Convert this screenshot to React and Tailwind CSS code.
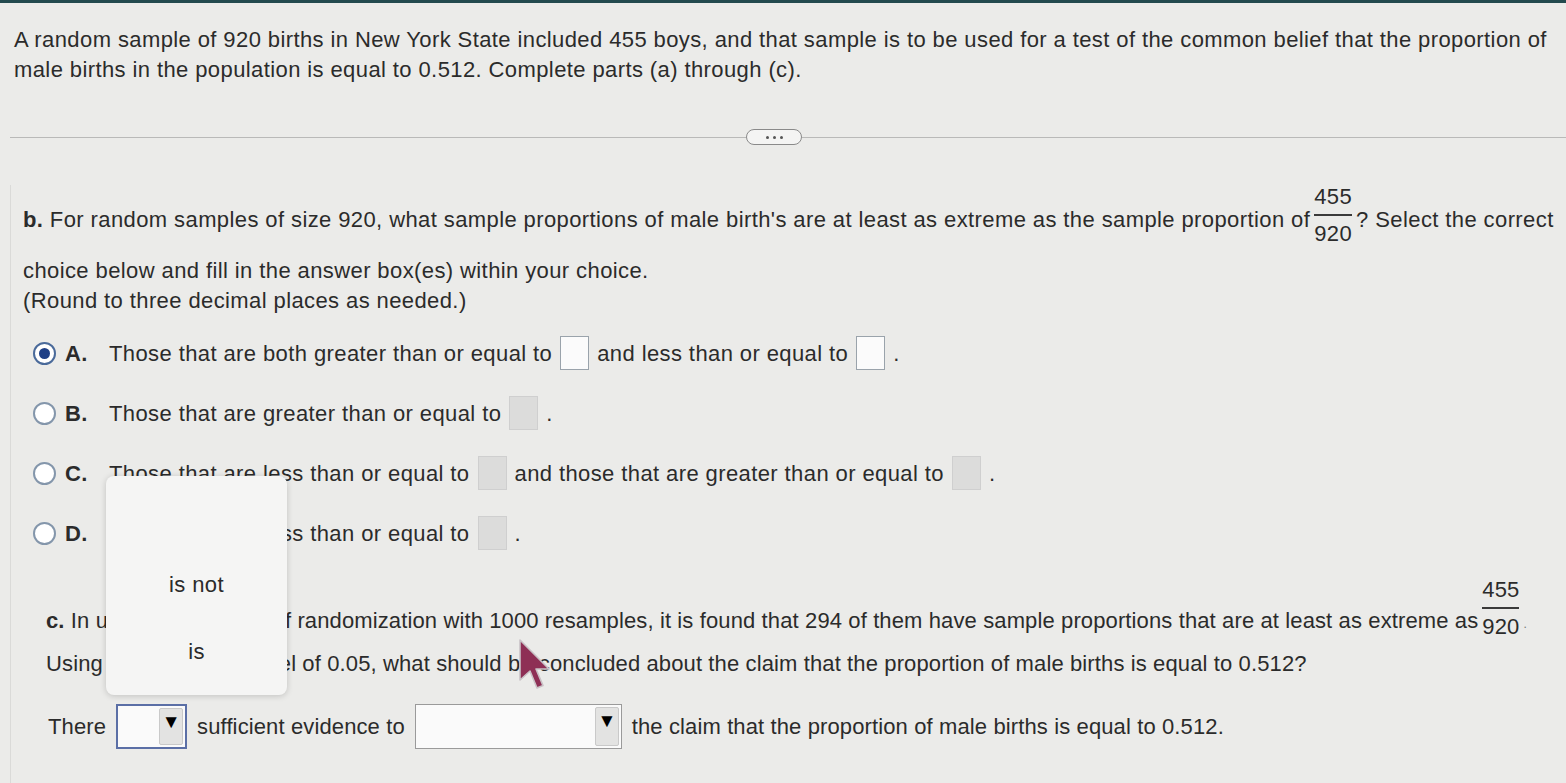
import React from 'react';

function Frac({ num, den }) {
  return (
    <span className="inline-flex flex-col items-center px-[4px]">
      <span className="leading-[24px] pb-[5px]">{num}</span>
      <span className="h-[2px] w-full bg-[#3a3a3a]"></span>
      <span className="leading-[24px] pt-[6px]">{den}</span>
    </span>
  );
}

function Radio({ checked }) {
  return (
    <span className={`flex h-[23px] w-[23px] items-center justify-center rounded-full border-2 bg-white ${checked ? 'border-[#4a6a9a]' : 'border-[#8496ab]'}`}>
      {checked && <span className="h-[11px] w-[11px] rounded-full bg-[#1e3f86]"></span>}
    </span>
  );
}

function Box({ filled }) {
  return (
    <span className={`mx-[8px] inline-block h-[34px] w-[29px] border ${filled ? 'bg-[#dcdcdb] border-[#cfcfcf]' : 'bg-[#fbfbfb] border-[#9aa3ab]'}`}></span>
  );
}

function Option({ letter, checked, children }) {
  return (
    <div className="flex h-[34px] items-center pl-[32px] whitespace-nowrap">
      <Radio checked={checked} />
      <span className="ml-[9px] w-[44px] font-bold">{letter}</span>
      {children}
    </div>
  );
}

function Select({ width, focused }) {
  return (
    <span
      className={`mx-[10px] flex h-[45px] items-stretch justify-end bg-[#fafafa] p-[2px] ${focused ? 'border-2 border-[#5b6fa6]' : 'border border-[#9a9a9a]'}`}
      style={{ width }}
    >
      <span className="flex w-[24px] items-start justify-center rounded-[2px] border border-[#c9c9c9] bg-[#e3e3e2] pt-[3px] text-[19px] leading-[20px] tracking-normal text-black">
        ▼
      </span>
    </span>
  );
}

export default function App() {
  return (
    <div className="relative min-h-screen overflow-hidden bg-[#ebebe9] font-['Liberation_Sans',Arial,sans-serif] text-[22px] tracking-[0.4px] text-[#2b2b2b]">
      <div className="h-[3px] bg-[#234a4e]"></div>

      <div className="pl-[14px] pt-[22px] leading-[30px] whitespace-nowrap">
        <div>A random sample of 920 births in New York State included 455 boys, and that sample is to be used for a test of the common belief that the proportion of</div>
        <div>male births in the population is equal to 0.512. Complete parts (a) through (c).</div>
      </div>

      <div className="mt-[44px] flex h-[16px] items-center pl-[10px]">
        <div className="h-[1px] w-[736px] bg-[#b9b9b8]"></div>
        <div className="flex h-[16px] w-[56px] items-center justify-center gap-[4px] rounded-full border-[1.5px] border-[#8a8a8a] bg-[#f4f4f3]">
          <span className="h-[3px] w-[3px] rounded-full bg-[#555]"></span>
          <span className="h-[3px] w-[3px] rounded-full bg-[#555]"></span>
          <span className="h-[3px] w-[3px] rounded-full bg-[#555]"></span>
        </div>
        <div className="h-[1px] flex-1 bg-[#b9b9b8]"></div>
      </div>

      <div className="ml-[10px] border-l border-[#dadad8]">
        <div className="mt-[40px] flex items-start pl-[12px] whitespace-nowrap">
          <span className="mt-[20px] leading-[30px]">
            <b>b.</b> For random samples of size 920, what sample proportions of male birth's are at least as extreme as the sample proportion of
          </span>
          <Frac num="455" den="920" />
          <span className="mt-[20px] leading-[30px]">? Select the correct</span>
        </div>
        <div className="mt-[10px] pl-[12px] leading-[30px]">choice below and fill in the answer box(es) within your choice.</div>
        <div className="pl-[12px] leading-[30px]">(Round to three decimal places as needed.)</div>

        <div className="mt-[20px] flex flex-col gap-[26px] -ml-[10px]">
          <Option letter="A." checked>
            Those that are both greater than or equal to<Box />and less than or equal to<Box />.
          </Option>
          <Option letter="B.">
            Those that are greater than or equal to<Box filled />.
          </Option>
          <Option letter="C.">
            Those that are less than or equal to<Box filled />and those that are greater than or equal to<Box filled />.
          </Option>
          <Option letter="D.">
            Those that are less than or equal to<Box filled />.
          </Option>
        </div>

        <div className="tracking-[0.12px]">
          <div className="mt-[28px] flex items-start pl-[35px] whitespace-nowrap">
            <span className="mt-[28px] leading-[30px]">
              <b>c.</b> In using the method of randomization with 1000 resamples, it is found that 294 of them have sample proportions that are at least as extreme as
            </span>
            <Frac num="455" den="920" />
            <span className="mt-[36px] text-[12px] leading-[20px] text-[#777]">.</span>
          </div>
          <div className="mt-[10px] pl-[35px] leading-[30px] whitespace-nowrap">
            Using a significance level of 0.05, what should be concluded about the claim that the proportion of male births is equal to 0.512?
          </div>

          <div className="mt-[25px] flex h-[45px] items-center pl-[37px] whitespace-nowrap">
            <span>There</span>
            <Select width={71} focused />
            <span>sufficient evidence to</span>
            <Select width={207} />
            <span>the claim that the proportion of male births is equal to 0.512.</span>
          </div>
        </div>
        <div className="h-[40px]"></div>
      </div>

      {/* open dropdown menu */}
      <div className="absolute left-[106px] top-[476px] flex h-[219px] w-[181px] flex-col items-center rounded-[8px] bg-[#f5f5f4] pt-[95px] shadow-[0_1px_6px_rgba(0,0,0,0.18)]">
        <span className="leading-[28px]">is not</span>
        <span className="mt-[39px] leading-[28px]">is</span>
      </div>

      {/* mouse pointer */}
      <svg className="absolute left-[518px] top-[638px]" width="34" height="54" viewBox="0 0 17 27">
        <path d="M1 1 L1 21 L6 16.5 L9.5 25 L12.5 23.8 L9 15.5 L15.5 15.5 Z" fill="#8e2f55" stroke="#c9c2c6" strokeWidth="0.8" strokeLinejoin="round" />
      </svg>
    </div>
  );
}
